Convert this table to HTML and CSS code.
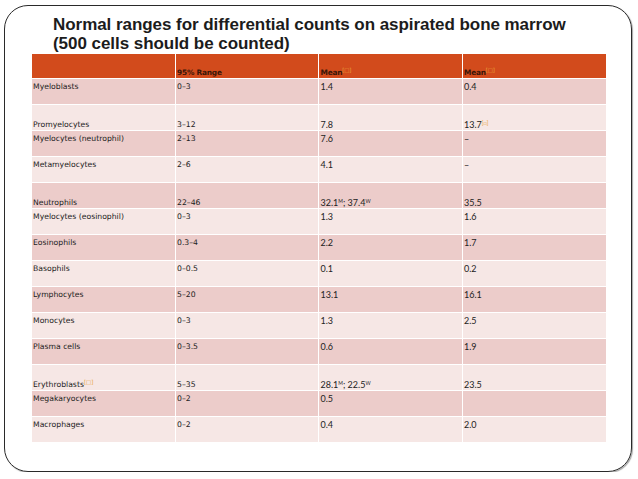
FILE: index.html
```html
<!DOCTYPE html>
<html>
<head>
<meta charset="utf-8">
<link rel="stylesheet" href="styles.css">
</head>
<body>
<div class="frame">
  <h1 class="title">Normal ranges for differential counts on aspirated bone marrow<br>(500 cells should be counted)</h1>
  <table class="grid">
    <colgroup><col class="c"><col class="c"><col class="c"><col class="c"></colgroup>
    <thead>
      <tr class="head"><th></th><th>95% Range</th><th>Mean<sup class="ref">[□]</sup></th><th>Mean<sup class="ref">[□]</sup></th></tr>
    </thead>
    <tbody>
      <tr class="dark"><td>Myeloblasts</td><td>0–3</td><td class="n">1.4</td><td class="n">0.4</td></tr>
      <tr class="light low"><td>Promyelocytes</td><td>3–12</td><td class="n">7.8</td><td class="n">13.7<sup class="ref">[□]</sup></td></tr>
      <tr class="dark"><td>Myelocytes (neutrophil)</td><td>2–13</td><td class="n">7.6</td><td class="n">–</td></tr>
      <tr class="light"><td>Metamyelocytes</td><td>2–6</td><td class="n">4.1</td><td class="n">–</td></tr>
      <tr class="dark low"><td>Neutrophils</td><td>22–46</td><td class="n">32.1<sup class="mw">M</sup>; 37.4<sup class="mw">W</sup></td><td class="n">35.5</td></tr>
      <tr class="light"><td>Myelocytes (eosinophil)</td><td>0–3</td><td class="n">1.3</td><td class="n">1.6</td></tr>
      <tr class="dark"><td>Eosinophils</td><td>0.3–4</td><td class="n">2.2</td><td class="n">1.7</td></tr>
      <tr class="light"><td>Basophils</td><td>0–0.5</td><td class="n">0.1</td><td class="n">0.2</td></tr>
      <tr class="dark"><td>Lymphocytes</td><td>5–20</td><td class="n">13.1</td><td class="n">16.1</td></tr>
      <tr class="light"><td>Monocytes</td><td>0–3</td><td class="n">1.3</td><td class="n">2.5</td></tr>
      <tr class="dark"><td>Plasma cells</td><td>0–3.5</td><td class="n">0.6</td><td class="n">1.9</td></tr>
      <tr class="light low"><td>Erythroblasts<sup class="ref">[□]</sup></td><td>5–35</td><td class="n">28.1<sup class="mw">M</sup>; 22.5<sup class="mw">W</sup></td><td class="n">23.5</td></tr>
      <tr class="dark"><td>Megakaryocytes</td><td>0–2</td><td class="n">0.5</td><td class="n"></td></tr>
      <tr class="light"><td>Macrophages</td><td>0–2</td><td class="n">0.4</td><td class="n">2.0</td></tr>
    </tbody>
  </table>
</div>
</body>
</html>
```
FILE: styles.css
```css
html, body {
  margin: 0;
  padding: 0;
  background: #ffffff;
}
.frame {
  box-sizing: border-box;
  margin: 5px 6px 0 4px;
  height: 467px;
  border: 1.5px solid #2a2a2a;
  border-radius: 24px;
  box-shadow: 1px 1px 1px rgba(0,0,0,0.35);
  padding: 9px 0 0 0;
}
.title {
  margin: 0 0 0 48px;
  font-family: "Liberation Sans", sans-serif;
  font-weight: bold;
  font-size: 17px;
  letter-spacing: -0.05px;
  line-height: 19px;
  color: #1c1c1c;
  height: 39px;
  padding-top: 0;
}
.grid {
  margin: 0 0 0 26.5px;
  border-collapse: collapse;
  table-layout: fixed;
  width: 574px;
  font-family: "DejaVu Sans", sans-serif;
  font-size: 7.7px;
  color: #222;
}
.c { width: 143.5px; }
.grid th, .grid td {
  padding: 0 1px 0 1.5px;
  border-left: 1px solid #ffffff;
  text-align: left;
  line-height: 11px;
  white-space: nowrap;
}
.grid tr > :first-child { border-left: none; }
.head th {
  background: #d24b1c;
  height: 24px;
  box-sizing: border-box;
  vertical-align: bottom;
  padding-bottom: 0;
  font-weight: bold;
  font-size: 7.4px;
  letter-spacing: -0.2px;
  color: #3a1608;
}
.grid tbody td {
  box-sizing: content-box;
  border-top: 1px solid #ffffff;
  vertical-align: top;
  padding-top: 2px;
  height: 23px;
}
.grid tbody tr.low td {
  vertical-align: bottom;
  padding-top: 0;
  padding-bottom: 0;
  height: 25px;
}
.dark td { background: #ecccca; }
.light td { background: #f6e7e5; }
.n {
  font-family: "Lato", "Liberation Sans", sans-serif;
  font-size: 9px;
}
.ref {
  font-size: 5.5px;
  color: #e9a23a;
  vertical-align: 3px;
  line-height: 0;
  font-weight: normal;
}
.mw {
  font-size: 5px;
  vertical-align: 3px;
  line-height: 0;
}
```
